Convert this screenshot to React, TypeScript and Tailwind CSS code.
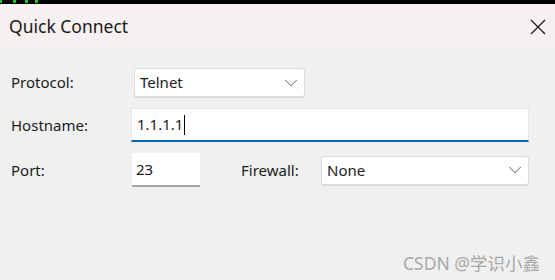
import { ChevronDown } from 'lucide-react';

const font = { fontFamily: '"Noto Sans", "Noto Sans CJK SC", sans-serif' };

function Select({ value, className }: { value: string; className: string }) {
  return (
    <div
      className={`flex items-center justify-between bg-white border border-[#dcdcdc] rounded-[3px] shadow-[0_1px_1px_rgba(0,0,0,0.12)] pl-[5px] pr-[2px] ${className}`}
    >
      <span className="text-[15px] text-[#1b1b1b] leading-none">{value}</span>
      <ChevronDown size={22} strokeWidth={1.1} className="text-[#7a7a7a]" />
    </div>
  );
}

export default function App() {
  return (
    <div className="w-[555px] h-[280px] flex flex-col overflow-hidden" style={font}>
      {/* background window peeking above */}
      <div className="h-[4px] bg-black flex items-start shrink-0">
        <span className="w-[2px] h-[3px] bg-[#22c422]" />
        <span className="w-[3px] h-[3px] bg-[#22c422] ml-[11px]" />
        <span className="w-[3px] h-[3px] bg-[#22c422] ml-[9px]" />
        <span className="w-[3px] h-[3px] bg-[#22c422] ml-[7px]" />
      </div>

      {/* Title bar */}
      <div className="h-[45px] shrink-0 bg-[#f6f0f1] flex items-center justify-between pl-[9px] pr-[9px]">
        <span className="text-[17.5px] text-[#1a1a1a] leading-none">Quick Connect</span>
        <svg width="16" height="16" viewBox="0 0 16 16" className="text-[#1a1a1a]">
          <path d="M1 1 15 15M15 1 1 15" stroke="currentColor" strokeWidth="1.3" fill="none" />
        </svg>
      </div>

      {/* Body */}
      <div className="flex-1 bg-[#f0f0f0] flex flex-col pt-[19px] pl-[11px]">
        <div className="flex items-center h-[29px]">
          <span className="w-[123px] text-[15px] text-[#1b1b1b]">Protocol:</span>
          <Select value="Telnet" className="w-[171px] h-[29px]" />
        </div>

        <div className="flex items-center h-[34px] mt-[11px]">
          <span className="w-[120px] text-[15px] text-[#1b1b1b]">Hostname:</span>
          <div className="w-[398px] h-[34px] bg-white border border-[#e6e6e6] border-b-2 border-b-[#0067c0] flex items-center pl-[5px]">
            <span className="text-[15px] text-[#1b1b1b] leading-none">1.1.1.1</span>
            <span className="w-px h-[20px] bg-black ml-[1px]" />
          </div>
        </div>

        <div className="flex items-center h-[34px] mt-[11px]">
          <span className="w-[121px] text-[15px] text-[#1b1b1b]">Port:</span>
          <div className="w-[68px] h-[34px] bg-white border-b-2 border-b-[#a8a8a8] pl-[4px] pt-[4px]">
            <span className="text-[15px] text-[#1b1b1b] leading-none">23</span>
          </div>
          <span className="ml-[41px] w-[80px] text-[15px] text-[#1b1b1b]">Firewall:</span>
          <Select value="None" className="w-[208px] h-[29px]" />
        </div>

        <div className="mt-auto mb-[8px] flex justify-end pr-[15px]">
          <span className="text-[17.5px] text-[#a8a8a8] leading-none">CSDN @学识小鑫</span>
        </div>
      </div>
    </div>
  );
}
